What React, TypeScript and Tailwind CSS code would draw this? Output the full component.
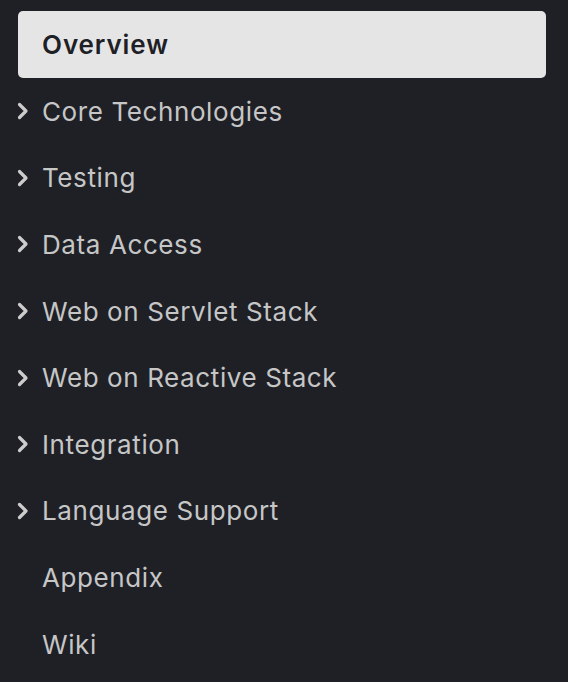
const items = [
  { label: "Core Technologies", chevron: true },
  { label: "Testing", chevron: true },
  { label: "Data Access", chevron: true },
  { label: "Web on Servlet Stack", chevron: true },
  { label: "Web on Reactive Stack", chevron: true },
  { label: "Integration", chevron: true },
  { label: "Language Support", chevron: true },
  { label: "Appendix", chevron: false },
  { label: "Wiki", chevron: false },
];

function Chevron() {
  return (
    <svg width="12" height="18" viewBox="0 0 12 18" className="absolute left-[17px] top-1/2 -translate-y-1/2">
      <path d="M2.5 2.5 L9 9 L2.5 15.5" fill="none" stroke="#cccccc" strokeWidth="3.2" strokeLinecap="round" strokeLinejoin="round" />
    </svg>
  );
}

export default function App() {
  return (
    <div className="h-[682px] w-[568px] overflow-hidden bg-[#1e2026] pl-[18px] pr-[22px] pt-[11px] font-['Inter',sans-serif]">
      <ul className="flex flex-col">
        <li className="flex h-[67px] items-center rounded-[5px] bg-[#e5e5e5] pl-[24px] text-[26px] font-semibold tracking-[0.9px] text-[#1e2026]">
          Overview
        </li>
        {items.map((item) => (
          <li key={item.label} className="relative -ml-[18px] flex h-[66.6px] items-center pl-[42px] text-[26px] tracking-[0.6px] text-[#c6c6c6]">
            {item.chevron && <Chevron />}
            {item.label}
          </li>
        ))}
      </ul>
    </div>
  );
}
